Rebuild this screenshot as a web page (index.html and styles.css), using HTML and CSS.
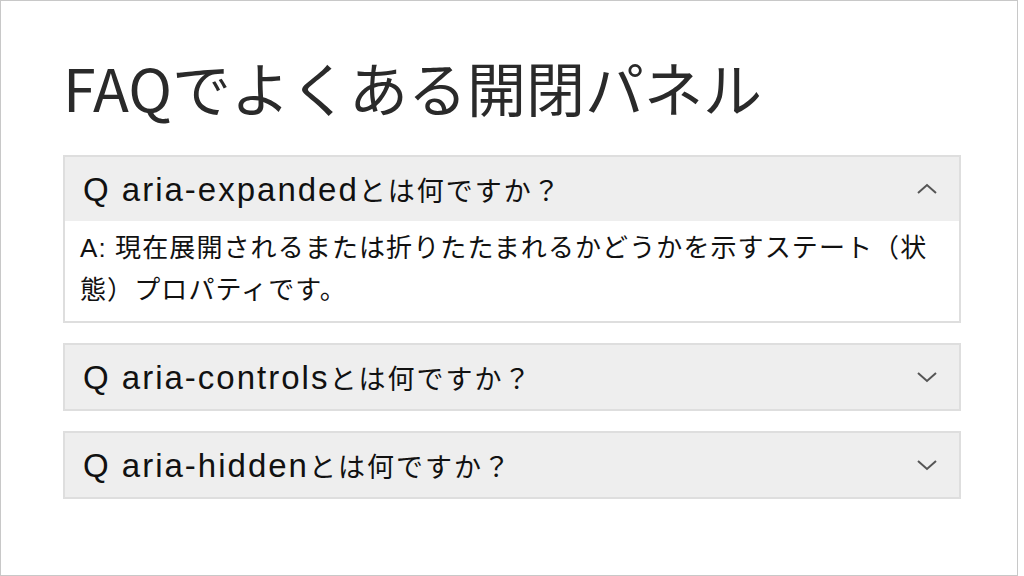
FILE: index.html
```html
<!DOCTYPE html>
<html lang="ja">
<head>
<meta charset="utf-8">
<title>FAQでよくある開閉パネル</title>
<link rel="stylesheet" href="styles.css">
</head>
<body>
<div class="frame">
  <h1 class="title">FAQでよくある開閉パネル</h1>
  <div class="faq">
    <div class="item">
      <div class="q">
        <span class="q-text"><span class="en">Q aria-expanded</span>とは何ですか？</span>
        <svg class="chev" viewBox="0 0 22 12" width="22" height="12"><path d="M2 10 L11 2 L20 10" fill="none" stroke="#555" stroke-width="2"/></svg>
      </div>
      <div class="a">A: 現在展開されるまたは折りたたまれるかどうかを示すステート（状態）プロパティです。</div>
    </div>
    <div class="item">
      <div class="q">
        <span class="q-text"><span class="en">Q aria-controls</span>とは何ですか？</span>
        <svg class="chev" viewBox="0 0 22 12" width="22" height="12"><path d="M2 2 L11 10 L20 2" fill="none" stroke="#555" stroke-width="2"/></svg>
      </div>
    </div>
    <div class="item">
      <div class="q">
        <span class="q-text"><span class="en">Q aria-hidden</span>とは何ですか？</span>
        <svg class="chev" viewBox="0 0 22 12" width="22" height="12"><path d="M2 2 L11 10 L20 2" fill="none" stroke="#555" stroke-width="2"/></svg>
      </div>
    </div>
  </div>
</div>
</body>
</html>
```

FILE: styles.css
```css
* { box-sizing: border-box; }
html, body { margin: 0; padding: 0; background: #fff; }
body { font-family: "Liberation Sans", "Noto Sans CJK JP", sans-serif; color: #222; }

.frame {
  width: 1018px;
  height: 576px;
  border: 1px solid #c8c8c8;
  padding: 0 56px 0 62px;
  display: flex;
  flex-direction: column;
}

.title {
  margin: 0;
  padding-top: 51px;
  font-family: "Noto Sans CJK JP", sans-serif;
  font-weight: 400;
  font-size: 59px;
  line-height: 70px;
  color: #2a2a2a;
  letter-spacing: 0;
}

.faq {
  margin-top: 33px;
  display: flex;
  flex-direction: column;
  gap: 20px;
}

.item {
  border: 2px solid #dedede;
}

.q {
  height: 64px;
  background: #eeeeee;
  display: flex;
  align-items: center;
  justify-content: space-between;
  padding: 0 21px 0 18px;
}

.q-text {
  font-size: 27px;
  line-height: 1;
  letter-spacing: 2px;
  color: #111;
}

.q-text .en {
  font-size: 33px;
  letter-spacing: 2px;
}

.chev { display: block; }

.a {
  background: #fff;
  padding: 6px 12px 10px 15px;
  font-size: 26px;
  line-height: 42px;
  letter-spacing: 1.1px;
  color: #111;
}
```
